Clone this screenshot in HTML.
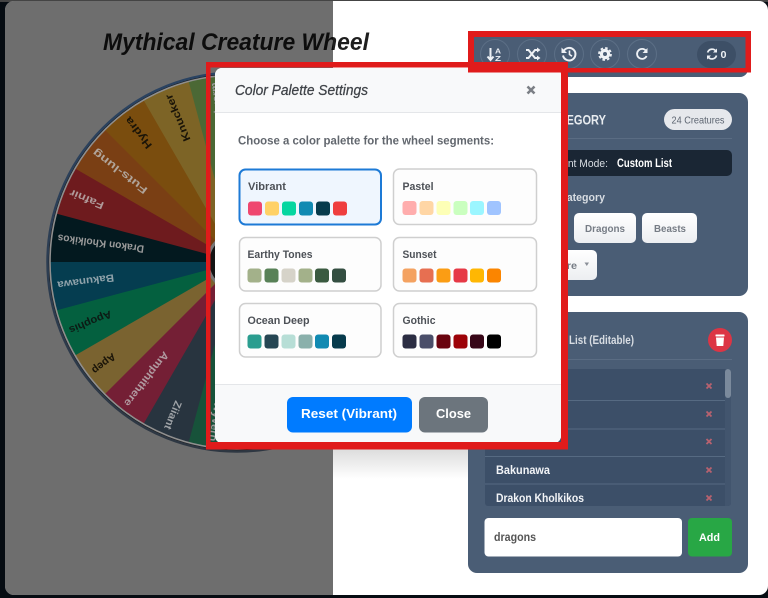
<!DOCTYPE html>
<html lang="en">
<head>
<meta charset="utf-8">
<title>Mythical Creature Wheel</title>
<style>
html,body{margin:0;padding:0;background:#060c12;width:768px;height:598px;overflow:hidden}
svg{display:block;filter:blur(.35px)}
text{font-family:"Liberation Sans",sans-serif}
.b{font-weight:700}
</style>
</head>
<body>
<svg width="768" height="598" viewBox="0 0 768 598" xmlns="http://www.w3.org/2000/svg">
<defs>
<path id="w" d="M0 0L187 0A187 187 0 0 1 180.2 49.9Z"/>
<linearGradient id="sh" x1="0" y1="0" x2="0" y2="1"><stop offset="0" stop-color="#dcdcdc"/><stop offset="1" stop-color="#fff"/></linearGradient>
<linearGradient id="btn" x1="0" y1="0" x2="0" y2="1"><stop offset="0" stop-color="#fff"/><stop offset="1" stop-color="#eceef1"/></linearGradient>
<linearGradient id="rim" x1="0" y1="0" x2="0" y2="1"><stop offset="0" stop-color="#2a4362"/><stop offset="1" stop-color="#2e3742"/></linearGradient>
<clipPath id="listclip"><rect x="485" y="369" width="246" height="137" rx="3"/></clipPath>
</defs>

<!-- page -->
<rect x="0" y="0" width="768" height="598" fill="#060c12"/>
<rect x="0" y="0" width="768" height="2" fill="#444"/>
<rect x="5" y="1" width="763" height="594" rx="9" fill="#fff"/>
<rect x="333" y="449" width="135" height="30" fill="url(#sh)"/>

<text x="103" y="50" class="b" font-style="italic" font-size="24" fill="#1e1e1e" textLength="266" lengthAdjust="spacingAndGlyphs">Mythical Creature Wheel</text>

<!-- dim overlay on left -->
<path d="M14 1H333V595H14A9 9 0 0 1 5 586V10A9 9 0 0 1 14 1Z" fill="#000" fill-opacity=".57"/>

<!-- wheel, final dimmed colours -->
<circle cx="237" cy="262" r="189.5" fill="#141414" stroke="url(#rim)" stroke-width="2.5"/>
<g transform="translate(237 262)">
<use href="#w" transform="rotate(90)" fill="#17523a"/>
<use href="#w" transform="rotate(105)" fill="#28343f"/>
<use href="#w" transform="rotate(120)" fill="#741f35"/>
<use href="#w" transform="rotate(135)" fill="#7a6330"/>
<use href="#w" transform="rotate(150)" fill="#04603f"/>
<use href="#w" transform="rotate(165)" fill="#053d50"/>
<use href="#w" transform="rotate(180)" fill="#03191f"/>
<use href="#w" transform="rotate(195)" fill="#6e1b1e"/>
<use href="#w" transform="rotate(210)" fill="#7a3f14"/>
<use href="#w" transform="rotate(225)" fill="#7a4d0e"/>
<use href="#w" transform="rotate(240)" fill="#7d6426"/>
<use href="#w" transform="rotate(255)" fill="#4b6835"/>
<circle r="187" fill="none" stroke="#8f8f8f" stroke-width="1.6"/>
<g font-size="10.5" text-anchor="end" class="b">
<text transform="rotate(187.5)" x="181" y="4" fill="#9a9a9a" textLength="87" lengthAdjust="spacingAndGlyphs">Drakon Kholkikos</text>
<text transform="rotate(202.5)" x="181" y="4" fill="#b09a9a" textLength="36" lengthAdjust="spacingAndGlyphs">Fafnir</text>
<text transform="rotate(217.5)" x="181" y="4" fill="#b0a49a" textLength="66" lengthAdjust="spacingAndGlyphs">Futs-lung</text>
<text transform="rotate(232.5)" x="181" y="4" fill="#1a1408" textLength="37" lengthAdjust="spacingAndGlyphs">Hydra</text>
<text transform="rotate(247.5)" x="181" y="4" fill="#1a1408" textLength="50" lengthAdjust="spacingAndGlyphs">Knucker</text>
<text transform="rotate(262.5)" x="181" y="4" fill="#9a9a9a" textLength="50" lengthAdjust="spacingAndGlyphs">Lindworm</text>
<text transform="rotate(172.5)" x="181" y="4" fill="#8fa2aa" textLength="57" lengthAdjust="spacingAndGlyphs">Bakunawa</text>
<text transform="rotate(157.5)" x="181" y="4" fill="#0c1a14" textLength="45" lengthAdjust="spacingAndGlyphs">Apophis</text>
<text transform="rotate(142.5)" x="181" y="4" fill="#1a1408" textLength="27" lengthAdjust="spacingAndGlyphs">Apep</text>
<text transform="rotate(127.5)" x="181" y="4" fill="#b09aa0" textLength="66" lengthAdjust="spacingAndGlyphs">Amphithere</text>
<text transform="rotate(112.5)" x="181" y="4" fill="#a0a4a8" textLength="30" lengthAdjust="spacingAndGlyphs">Ziiant</text>
<text transform="rotate(97.5)" x="181" y="4" fill="#9a9a9a" textLength="40" lengthAdjust="spacingAndGlyphs">Wyvern</text>
</g>
<circle r="29" fill="#141414" stroke="#777" stroke-width="3"/>
</g>

<!-- toolbar -->
<rect x="468" y="31" width="280" height="46" rx="8" fill="#4a5d75"/>
<g fill="none" stroke="#5c6f86" stroke-width="1">
<circle cx="495" cy="54" r="14.5"/><circle cx="532" cy="54" r="14.5"/><circle cx="569" cy="54" r="14.5"/><circle cx="605" cy="54" r="14.5"/><circle cx="642" cy="54" r="14.5"/>
</g>
<rect x="697" y="41" width="39" height="27" rx="13.5" fill="#3d4f66"/>
<g fill="none" stroke="#eef1f5" stroke-width="2">
<path d="M490.5 48V59.5M487.5 56.5L490.5 60L493.5 56.5"/>
<path d="M526 50H528.5L535 58H538M526 58H528.5L535 50H538"/>
<path d="M563.6 51.2A6.3 6.3 0 1 1 563 55.5"/>
<path d="M569.5 50.5V54.5L572 56.2" stroke-width="1.6"/>
<path d="M646 50.8A5 5 0 1 0 646.6 56" stroke-width="1.8"/>
<path d="M707.6 52.5A4.7 4.7 0 0 1 716 51.3M716.5 55.5A4.7 4.7 0 0 1 708 56.7" stroke-width="1.7"/>
</g>
<g fill="#eef1f5">
<text x="495" y="53.5" class="b" font-size="7.5" textLength="6" lengthAdjust="spacingAndGlyphs">A</text>
<text x="495" y="61" class="b" font-size="7.5" textLength="6" lengthAdjust="spacingAndGlyphs">Z</text>
<path d="M537 47.5L540.5 50L537 52.5ZM537 55.5L540.5 58L537 60.5Z"/>
<path d="M561.5 47.5V53H567Z"/>
<path d="M647.5 48V53H642.5Z"/>
<path d="M717 48.5V52.5H713ZM707 59.5V55.5H711Z"/>
<circle cx="605" cy="54" r="5.2"/>
<circle cx="605" cy="54" r="6" fill="none" stroke="#eef1f5" stroke-width="1.8" stroke-dasharray="2.6 2.1"/>
</g>
<circle cx="605" cy="54" r="2" fill="#4a5d75"/>
<text x="720.5" y="58" class="b" font-size="10" fill="#eef1f5" textLength="6" lengthAdjust="spacingAndGlyphs">0</text>

<!-- category panel -->
<rect x="468" y="93" width="280" height="203" rx="9" fill="#4a5d75"/>
<text x="606" y="124.5" text-anchor="end" class="b" font-size="13.5" fill="#e8ecf0" textLength="108" lengthAdjust="spacingAndGlyphs">SELECT CATEGORY</text>
<rect x="664" y="109" width="68" height="21" rx="10.5" fill="#e6e8ec"/>
<text x="671.5" y="123.5" font-size="10.5" fill="#5c6470" textLength="53" lengthAdjust="spacingAndGlyphs">24 Creatures</text>
<rect x="484" y="138" width="248" height="1" fill="#5a6c83"/>
<rect x="484" y="150" width="248" height="26" rx="5" fill="#1a2634"/>
<text x="608" y="167" text-anchor="end" font-size="11" fill="#d8dde3" textLength="66" lengthAdjust="spacingAndGlyphs">Current Mode:</text>
<text x="617" y="167" class="b" font-size="11.5" fill="#fff" textLength="55" lengthAdjust="spacingAndGlyphs">Custom List</text>
<text x="605" y="201" text-anchor="end" class="b" font-size="11" fill="#d8dde3" textLength="80" lengthAdjust="spacingAndGlyphs">Select Category</text>
<rect x="574" y="213" width="62" height="30" rx="5" fill="url(#btn)"/>
<text x="585" y="232" class="b" font-size="10.5" fill="#767c85" textLength="40" lengthAdjust="spacingAndGlyphs">Dragons</text>
<rect x="642" y="213" width="55" height="30" rx="5" fill="url(#btn)"/>
<text x="654" y="232" class="b" font-size="10.5" fill="#767c85" textLength="32" lengthAdjust="spacingAndGlyphs">Beasts</text>
<rect x="520" y="213" width="48" height="30" rx="5" fill="url(#btn)"/>
<rect x="510" y="250" width="87" height="30" rx="5" fill="url(#btn)"/>
<text x="577" y="269" text-anchor="end" class="b" font-size="10.5" fill="#767c85" textLength="26" lengthAdjust="spacingAndGlyphs">More</text>
<path d="M584.5 262.5H589L586.8 266Z" fill="#8a8f98"/>

<!-- custom list panel -->
<rect x="468" y="312" width="280" height="261" rx="9" fill="#4a5d75"/>
<text x="634" y="344" text-anchor="end" class="b" font-size="12" fill="#d8dde3" textLength="65" lengthAdjust="spacingAndGlyphs">List (Editable)</text>
<rect x="484" y="359" width="248" height="1" fill="#5a6c83"/>
<circle cx="720" cy="340" r="12" fill="#dc3545"/>
<path d="M716 337.5H724L723.3 346H716.7Z" fill="#fff"/>
<rect x="715.5" y="334.5" width="9" height="2" rx=".5" fill="#fff"/>
<g clip-path="url(#listclip)">
<rect x="485" y="369" width="246" height="137" fill="#3c4f68"/>
<g fill="#566a82">
<rect x="485" y="400" width="240" height="1"/>
<rect x="485" y="428.5" width="240" height="1"/>
<rect x="485" y="456" width="240" height="1"/>
<rect x="485" y="483.5" width="240" height="1"/>
</g>
<rect x="725" y="369" width="6" height="137" fill="#42556e"/>
<rect x="725" y="369" width="6" height="29" rx="3" fill="#7b8a9c"/>
<g class="b" font-size="11.5" fill="#f2f4f7">
<text x="496" y="446" textLength="42" lengthAdjust="spacingAndGlyphs">Apophis</text>
<text x="496" y="474" textLength="54" lengthAdjust="spacingAndGlyphs">Bakunawa</text>
<text x="496" y="502" textLength="88" lengthAdjust="spacingAndGlyphs">Drakon Kholkikos</text>
</g>
<g stroke="#b8626f" stroke-width="1.8" fill="none">
<path d="M706.5 383.5L711.5 388.5M711.5 383.5L706.5 388.5"/>
<path d="M706.5 411.5L711.5 416.5M711.5 411.5L706.5 416.5"/>
<path d="M706.5 439L711.5 444M711.5 439L706.5 444"/>
<path d="M706.5 467.5L711.5 472.5M711.5 467.5L706.5 472.5"/>
<path d="M706.5 495.5L711.5 500.5M711.5 495.5L706.5 500.5"/>
</g>
</g>
<rect x="484.5" y="518" width="197.5" height="38.5" rx="4" fill="#fff"/>
<text x="494" y="541" class="b" font-size="11.5" fill="#555" textLength="42" lengthAdjust="spacingAndGlyphs">dragons</text>
<rect x="688" y="518" width="44" height="38.5" rx="4" fill="#28a745"/>
<text x="699" y="541" class="b" font-size="11" fill="#fff" textLength="21" lengthAdjust="spacingAndGlyphs">Add</text>

<!-- modal -->
<rect x="215" y="68" width="346" height="375" rx="7" fill="#fff"/>
<path d="M215 112V75A7 7 0 0 1 222 68H554A7 7 0 0 1 561 75V112Z" fill="#f8f9fa"/>
<rect x="215" y="112" width="346" height="1" fill="#e4e6e9"/>
<text x="235" y="95" font-style="italic" font-size="14.5" fill="#3f4348" stroke="#3f4348" stroke-width=".25" textLength="133" lengthAdjust="spacingAndGlyphs">Color Palette Settings</text>
<path d="M527.5 86.5L534.5 93.5M534.5 86.5L527.5 93.5" stroke="#7b7f85" stroke-width="2.6" fill="none"/>
<text x="238" y="144.5" class="b" font-size="11.5" fill="#62676e" textLength="256" lengthAdjust="spacingAndGlyphs">Choose a color palette for the wheel segments:</text>

<rect x="239.5" y="169.5" width="141.5" height="55" rx="6" fill="#eff6fe" stroke="#1d7ad6" stroke-width="2"/>
<rect x="393.5" y="169" width="143" height="55.5" rx="6" fill="#fdfdfd" stroke="#cfcfcf" stroke-width="1.5"/>
<rect x="239.5" y="237.5" width="141.5" height="53.5" rx="6" fill="#fdfdfd" stroke="#cfcfcf" stroke-width="1.5"/>
<rect x="393.5" y="237.5" width="143" height="53.5" rx="6" fill="#fdfdfd" stroke="#cfcfcf" stroke-width="1.5"/>
<rect x="239.5" y="303.5" width="141.5" height="53.5" rx="6" fill="#fdfdfd" stroke="#cfcfcf" stroke-width="1.5"/>
<rect x="393.5" y="303.5" width="143" height="53.5" rx="6" fill="#fdfdfd" stroke="#cfcfcf" stroke-width="1.5"/>

<g class="b" font-size="11" fill="#4d5157">
<text x="248" y="190" textLength="38" lengthAdjust="spacingAndGlyphs">Vibrant</text>
<text x="402.5" y="190" textLength="31" lengthAdjust="spacingAndGlyphs">Pastel</text>
<text x="247.5" y="258" textLength="65" lengthAdjust="spacingAndGlyphs">Earthy Tones</text>
<text x="402.5" y="258" textLength="34" lengthAdjust="spacingAndGlyphs">Sunset</text>
<text x="247.5" y="324" textLength="62" lengthAdjust="spacingAndGlyphs">Ocean Deep</text>
<text x="402.5" y="324" textLength="33" lengthAdjust="spacingAndGlyphs">Gothic</text>
</g>

<g>
<rect x="248" y="201.5" width="14" height="14" rx="3" fill="#ef476f"/><rect x="265" y="201.5" width="14" height="14" rx="3" fill="#ffd166"/><rect x="282" y="201.5" width="14" height="14" rx="3" fill="#06d6a0"/><rect x="299" y="201.5" width="14" height="14" rx="3" fill="#118ab2"/><rect x="316" y="201.5" width="14" height="14" rx="3" fill="#073b4c"/><rect x="333" y="201.5" width="14" height="14" rx="3" fill="#ef3e3e"/>
<rect x="402.5" y="201" width="14" height="14" rx="3" fill="#ffadad"/><rect x="419.5" y="201" width="14" height="14" rx="3" fill="#ffd6a5"/><rect x="436.5" y="201" width="14" height="14" rx="3" fill="#fdffb6"/><rect x="453.5" y="201" width="14" height="14" rx="3" fill="#caffbf"/><rect x="470" y="201" width="14" height="14" rx="3" fill="#9bf6ff"/><rect x="487" y="201" width="14" height="14" rx="3" fill="#a0c4ff"/>
<rect x="247.5" y="268.5" width="14" height="14" rx="3" fill="#a3b18a"/><rect x="264.5" y="268.5" width="14" height="14" rx="3" fill="#588157"/><rect x="281.5" y="268.5" width="14" height="14" rx="3" fill="#d6d3c9"/><rect x="298.5" y="268.5" width="14" height="14" rx="3" fill="#a3b18a"/><rect x="315" y="268.5" width="14" height="14" rx="3" fill="#3a5a40"/><rect x="332" y="268.5" width="14" height="14" rx="3" fill="#344e41"/>
<rect x="402.5" y="268.5" width="14" height="14" rx="3" fill="#f4a261"/><rect x="419.5" y="268.5" width="14" height="14" rx="3" fill="#e76f51"/><rect x="436.5" y="268.5" width="14" height="14" rx="3" fill="#fb9d14"/><rect x="453.5" y="268.5" width="14" height="14" rx="3" fill="#e63946"/><rect x="470" y="268.5" width="14" height="14" rx="3" fill="#ffb703"/><rect x="487" y="268.5" width="14" height="14" rx="3" fill="#fb8500"/>
<rect x="247.5" y="334.5" width="14" height="14" rx="3" fill="#2a9d8f"/><rect x="264.5" y="334.5" width="14" height="14" rx="3" fill="#264653"/><rect x="281.5" y="334.5" width="14" height="14" rx="3" fill="#b7ded6"/><rect x="298.5" y="334.5" width="14" height="14" rx="3" fill="#8ab0ab"/><rect x="315" y="334.5" width="14" height="14" rx="3" fill="#118ab2"/><rect x="332" y="334.5" width="14" height="14" rx="3" fill="#073b4c"/>
<rect x="402.5" y="334.5" width="14" height="14" rx="3" fill="#2b2d42"/><rect x="419.5" y="334.5" width="14" height="14" rx="3" fill="#4a4e69"/><rect x="436.5" y="334.5" width="14" height="14" rx="3" fill="#6a040f"/><rect x="453.5" y="334.5" width="14" height="14" rx="3" fill="#9d0208"/><rect x="470" y="334.5" width="14" height="14" rx="3" fill="#370617"/><rect x="487" y="334.5" width="14" height="14" rx="3" fill="#000"/>
</g>

<path d="M215 384H561V436A7 7 0 0 1 554 443H222A7 7 0 0 1 215 436Z" fill="#f8f9fa"/>
<rect x="215" y="384" width="346" height="1" fill="#e4e6e9"/>
<rect x="287" y="397" width="125" height="35.5" rx="6" fill="#007bff"/>
<text x="301" y="418" class="b" font-size="13" fill="#fff" textLength="96" lengthAdjust="spacingAndGlyphs">Reset (Vibrant)</text>
<rect x="419" y="397" width="69" height="35.5" rx="6" fill="#6c757d"/>
<text x="436" y="418" class="b" font-size="13" fill="#fff" textLength="35" lengthAdjust="spacingAndGlyphs">Close</text>

<!-- red annotations -->
<g fill="#e01b1b">
<rect x="206" y="62" width="362" height="5.5"/>
<rect x="206" y="62" width="4.5" height="387.5"/>
<rect x="561" y="62" width="7" height="387.5"/>
<rect x="206" y="442" width="362" height="7.5"/>
<rect x="468" y="31" width="283" height="6"/>
<rect x="468" y="31" width="6" height="41.5"/>
<rect x="745.5" y="31" width="5.5" height="41.5"/>
<rect x="468" y="68" width="283" height="4.5"/>
<rect x="468" y="62" width="100" height="10.5"/>
</g>
</svg>
</body>
</html>
